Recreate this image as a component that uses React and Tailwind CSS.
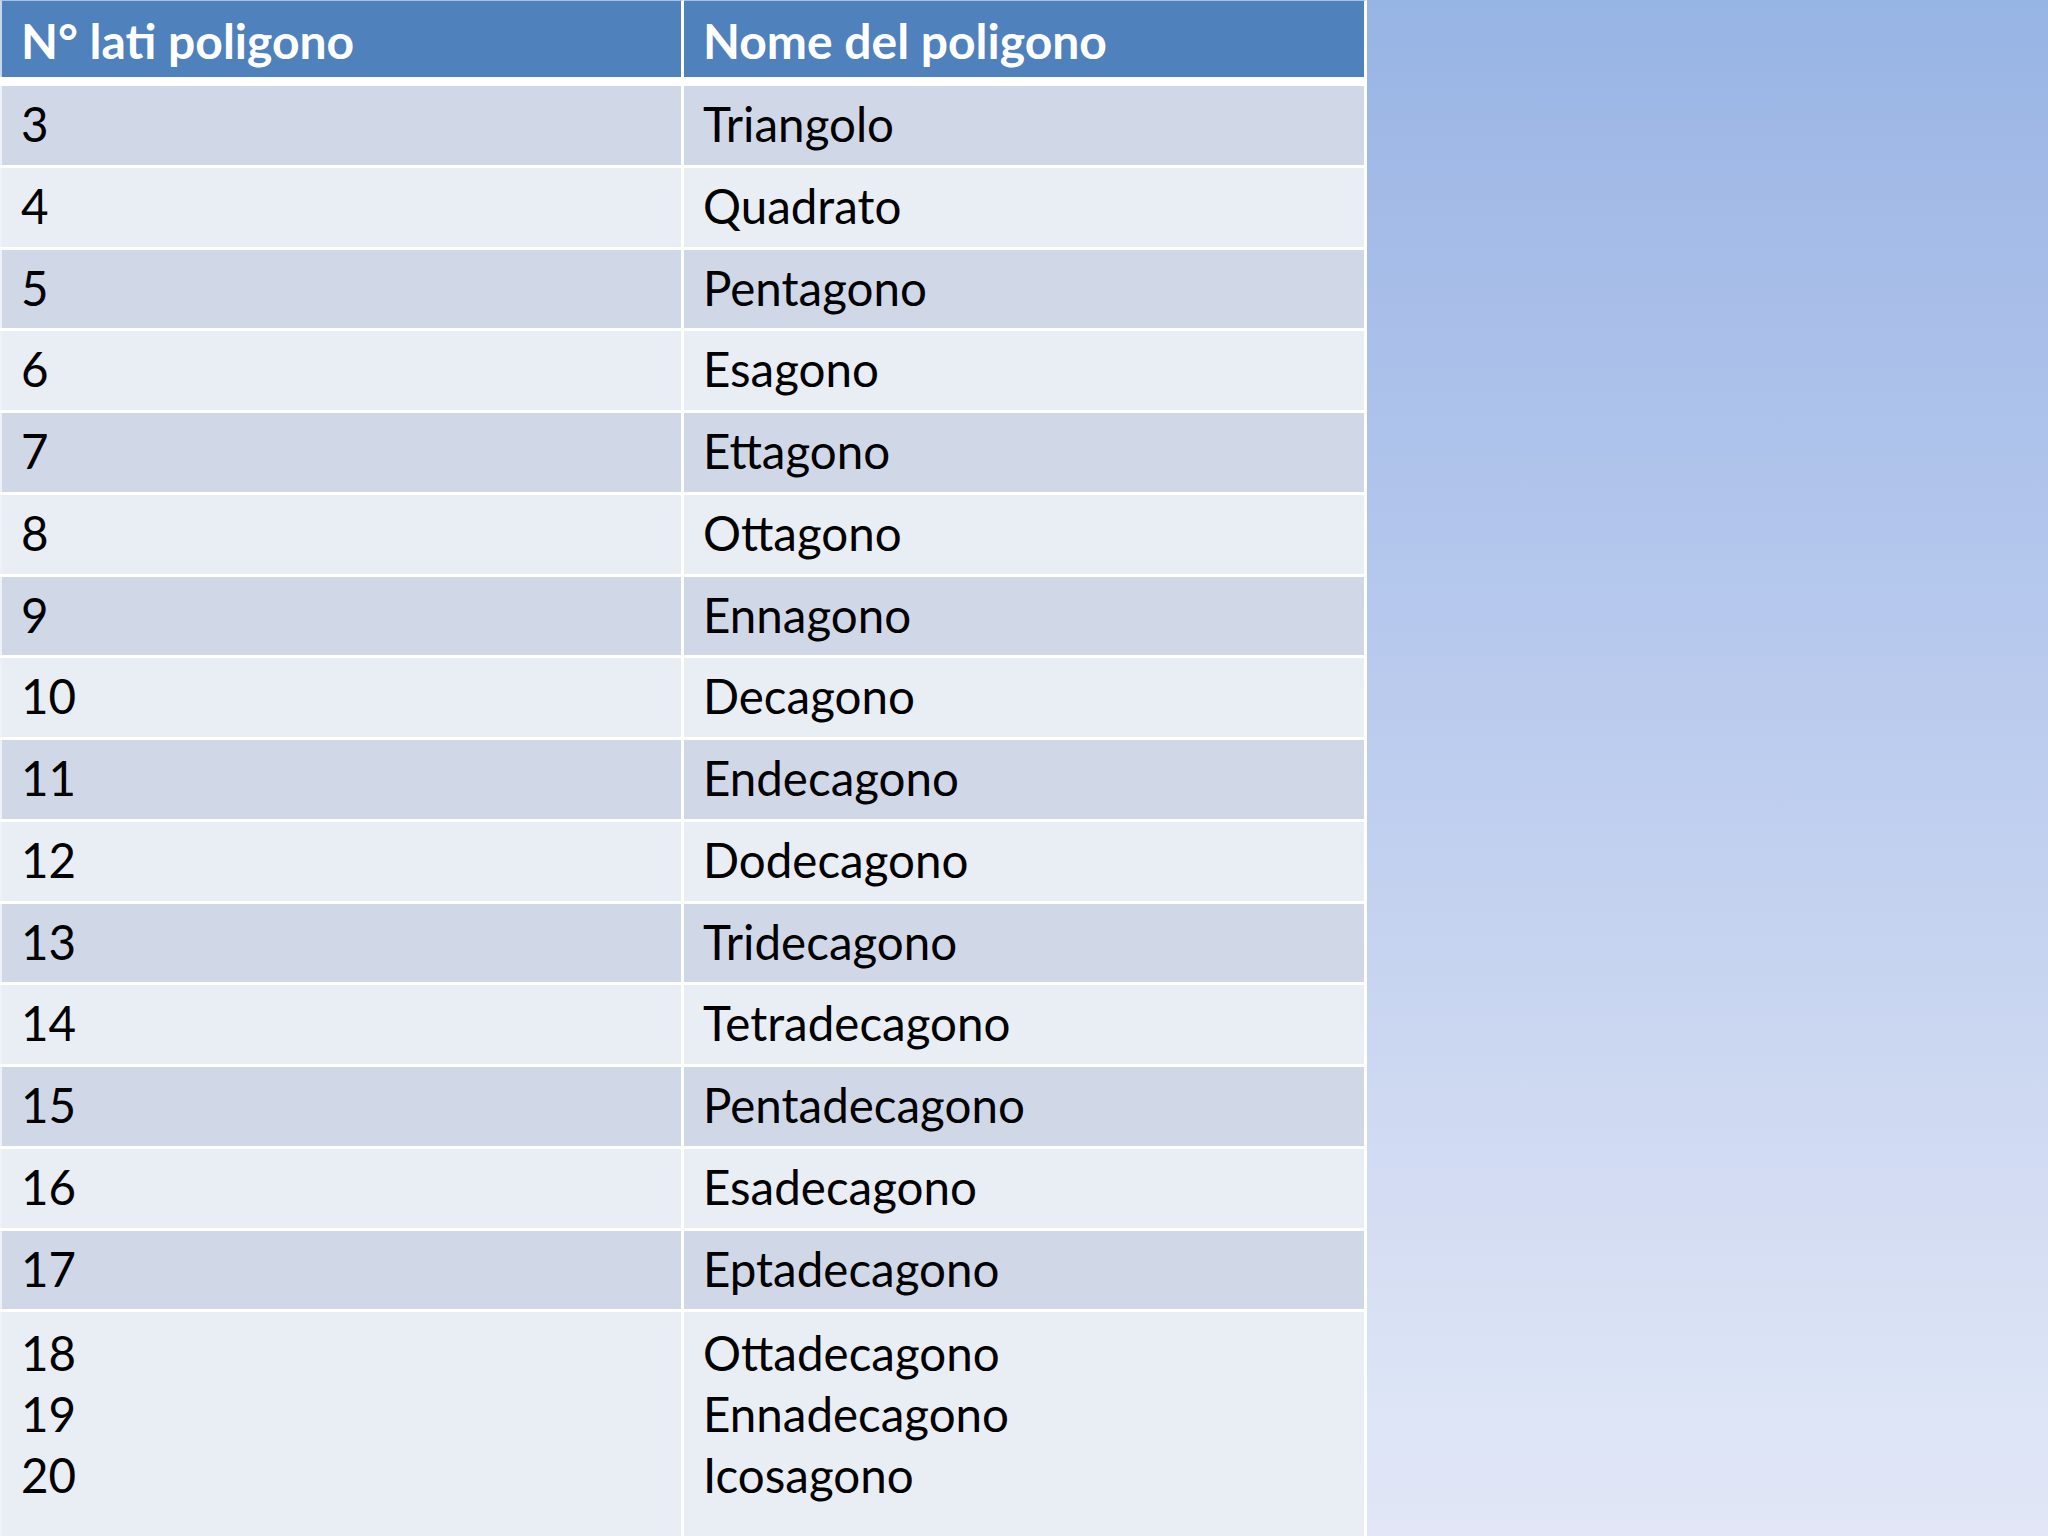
import React from "react";

const rows = [
  ["3", "Triangolo"],
  ["4", "Quadrato"],
  ["5", "Pentagono"],
  ["6", "Esagono"],
  ["7", "Ettagono"],
  ["8", "Ottagono"],
  ["9", "Ennagono"],
  ["10", "Decagono"],
  ["11", "Endecagono"],
  ["12", "Dodecagono"],
  ["13", "Tridecagono"],
  ["14", "Tetradecagono"],
  ["15", "Pentadecagono"],
  ["16", "Esadecagono"],
  ["17", "Eptadecagono"],
];

const lastRow = [
  ["18", "Ottadecagono"],
  ["19", "Ennadecagono"],
  ["20", "Icosagono"],
];

const App = () => {
  return (
    <div className="h-[1536px] w-full overflow-hidden bg-[linear-gradient(180deg,#96b4e4_0%,#a3bae7_12%,#abc1ea_25%,#b6c8ed_40%,#c1d0ef_55%,#cbd7f1_68%,#d5ddf3_80%,#dbe4f5_90%,#e2e6f7_100%)] font-[Lato,sans-serif]">
      <div className="flex h-full w-[1367px] flex-col">
        {/* header */}
        <div className="flex h-[86px] shrink-0 border-b-[9px] border-white">
          <div className="flex w-[684px] items-center border-r-[3px] border-t-[1px] border-l-[2px] border-t-[#a9c0e2] border-l-[#c9d7ec] border-r-white bg-[#4f81bd] pl-[19px] pt-[3px]">
            <span className="text-[48px] font-bold leading-none text-white">N° lati poligono</span>
          </div>
          <div className="flex w-[683px] items-center border-r-[3px] border-t-[1px] border-t-[#a9c0e2] border-r-white bg-[#4f81bd] pl-[19px] pt-[3px]">
            <span className="text-[48px] font-bold leading-none text-white">Nome del poligono</span>
          </div>
        </div>

        {rows.map((row, index) => (
          <div
            key={row[0]}
            className={`flex h-[81.75px] shrink-0 border-b-[3px] border-white ${index % 2 === 0 ? "bg-[#d0d8e8]" : "bg-[#e9edf4]"}`}
          >
            <div className="flex w-[684px] items-center border-r-[3px] border-l-[2px] border-l-[#eef1f8] border-r-white pb-[3px] pl-[19px]">
              <span className="text-[47.5px] leading-none text-black">{row[0]}</span>
            </div>
            <div className="flex w-[683px] items-center border-r-[3px] border-white pb-[3px] pl-[19px]">
              <span className="text-[47.5px] leading-none text-black">{row[1]}</span>
            </div>
          </div>
        ))}

        {/* last row, three lines in one cell */}
        <div className="flex flex-1 bg-[#e9edf4]">
          <div className="flex w-[684px] flex-col border-r-[3px] border-l-[2px] border-l-[#eef1f8] border-r-white pl-[19px] pt-[10px]">
            {lastRow.map((r) => (
              <span key={r[0]} className="text-[47.5px] leading-[61px] text-black">{r[0]}</span>
            ))}
          </div>
          <div className="flex w-[683px] flex-col border-r-[3px] border-white pl-[19px] pt-[10px]">
            {lastRow.map((r) => (
              <span key={r[1]} className="text-[47.5px] leading-[61px] text-black">{r[1]}</span>
            ))}
          </div>
        </div>
      </div>
    </div>
  );
};

export default App;
